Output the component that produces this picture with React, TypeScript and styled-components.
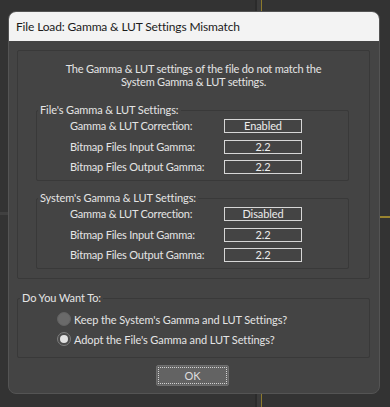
import React from "react";
import styled, { createGlobalStyle } from "styled-components";

const GlobalStyle = createGlobalStyle`
  html, body {
    margin: 0;
    padding: 0;
    width: 390px;
    height: 407px;
    overflow: hidden;
  }
  body {
    background-color: #333333;
    background-image:
      linear-gradient(#9a8430, #9a8430),
      linear-gradient(#404040, #404040),
      linear-gradient(#8d7a2c, #8d7a2c),
      linear-gradient(to right, #2b2b2b 0, #2b2b2b 2px, #3b3b3b 2px, #3b3b3b 7px);
    background-repeat: no-repeat;
    background-size: 10px 2px, 8px 3px, 1px 407px, 7px 407px;
    background-position: 380px 216px, 0 212px, 261px 0, 255px 0;
    font-family: Lato, "Noto Sans", sans-serif;
  }
`;

const Page = styled.div`
  padding: 11px 0 0 8px;
`;

const Dialog = styled.div`
  box-sizing: border-box;
  width: 372px;
  height: 383px;
  background: #444444;
  border: 1px solid #545454;
  border-radius: 8px;
  overflow: hidden;
  display: flex;
  flex-direction: column;
`;

const TitleBar = styled.div`
  height: 29px;
  flex: none;
  display: flex;
  align-items: center;
  padding-left: 7px;
  background: #f3f3f3;
  color: #1b1b1b;
  font-size: 12px;
  letter-spacing: -0.15px;
`;

const Body = styled.div`
  display: flex;
  flex-direction: column;
  padding: 9px 9px 7px 8px;
  color: #e4e4e4;
  font-size: 11px;
  letter-spacing: -0.1px;
`;

const Panel = styled.div`
  box-sizing: border-box;
  height: 229px;
  border: 1px solid #393939;
  border-radius: 2px;
  padding: 11px 0 8px;
  display: flex;
  flex-direction: column;
`;

const Message = styled.div`
  text-align: center;
  line-height: 13px;
  margin-bottom: 15px;
  letter-spacing: -0.2px;
`;

const Group = styled.fieldset<{ $gapTop?: number }>`
  margin: ${(p) => p.$gapTop ?? 0}px 20px 0 18px;
  padding: 2px 0 6px;
  border: 1px solid #393939;
  border-radius: 2px;
  min-width: 0;
`;

const Rows = styled.div`
  display: grid;
  grid-template-columns: 154px 78px;
  grid-auto-rows: 14px;
  row-gap: 6.5px;
  align-items: center;
  padding-left: 33px;
`;

const Legend = styled.legend<{ $offset: number }>`
  margin-left: ${(p) => p.$offset}px;
  padding: 0 2px;
  line-height: 14px;
`;

const RowLabel = styled.span`
  line-height: 14px;
  letter-spacing: -0.2px;
`;

const Field = styled.span`
  box-sizing: border-box;
  height: 14px;
  border: 1px solid #d6d6d6;
  text-align: center;
  line-height: 12px;
  color: #ececec;
`;

const ChoiceGroup = styled.fieldset`
  margin: 12px 0 0;
  padding: 4px 0 8px;
  border: 1px solid #393939;
  border-radius: 2px;
  min-width: 0;
`;

const Choices = styled.div`
  display: flex;
  flex-direction: column;
  padding-left: 39px;
`;

const Choice = styled.label`
  height: 20px;
  display: flex;
  align-items: center;
  gap: 3px;
`;

const RadioDot = styled.span<{ $checked?: boolean }>`
  box-sizing: border-box;
  width: 14px;
  height: 14px;
  border-radius: 50%;
  flex: none;
  display: flex;
  align-items: center;
  justify-content: center;
  background: ${(p) => (p.$checked ? "#4b4b4b" : "#6a6a6a")};
  border: 1px solid ${(p) => (p.$checked ? "#7c7c7c" : "#626262")};
  &::after {
    content: "";
    display: ${(p) => (p.$checked ? "block" : "none")};
    width: 8px;
    height: 8px;
    border-radius: 50%;
    background: #e2e2e2;
  }
`;

const ButtonRow = styled.div`
  display: flex;
  justify-content: center;
  margin-top: 7px;
  padding-right: 2px;
`;

const OkButton = styled.button`
  box-sizing: border-box;
  width: 73px;
  height: 21px;
  background: #636363;
  border: 1px solid #6f6f6f;
  border-radius: 2px;
  outline: 1px dotted #d2d2d2;
  outline-offset: -3px;
  color: #dedede;
  font-family: Lato, "Noto Sans", sans-serif;
  font-size: 11px;
  padding: 0;
`;

type Row = { label: string; value: string };

const fileRows: Row[] = [
  { label: "Gamma & LUT Correction:", value: "Enabled" },
  { label: "Bitmap Files Input Gamma:", value: "2.2" },
  { label: "Bitmap Files Output Gamma:", value: "2.2" },
];

const systemRows: Row[] = [
  { label: "Gamma & LUT Correction:", value: "Disabled" },
  { label: "Bitmap Files Input Gamma:", value: "2.2" },
  { label: "Bitmap Files Output Gamma:", value: "2.2" },
];

function SettingsGroup({ title, rows, gapTop }: { title: string; rows: Row[]; gapTop?: number }) {
  return (
    <Group $gapTop={gapTop}>
      <Legend $offset={1}>{title}</Legend>
      <Rows>
        {rows.map((r) => (
          <React.Fragment key={r.label}>
            <RowLabel>{r.label}</RowLabel>
            <Field>{r.value}</Field>
          </React.Fragment>
        ))}
      </Rows>
    </Group>
  );
}

export default function App() {
  return (
    <>
      <GlobalStyle />
      <Page>
        <Dialog>
          <TitleBar>File Load: Gamma &amp; LUT Settings Mismatch</TitleBar>
          <Body>
            <Panel>
              <Message>
                The Gamma &amp; LUT settings of the file do not match the
                <br />
                System Gamma &amp; LUT settings.
              </Message>
              <SettingsGroup title="File's Gamma & LUT Settings:" rows={fileRows} />
              <SettingsGroup title="System's Gamma & LUT Settings:" rows={systemRows} gapTop={10} />
            </Panel>
            <ChoiceGroup>
              <Legend $offset={2}>Do You Want To:</Legend>
              <Choices>
                <Choice>
                  <RadioDot />
                  Keep the System's Gamma and LUT Settings?
                </Choice>
                <Choice>
                  <RadioDot $checked />
                  Adopt the File's Gamma and LUT Settings?
                </Choice>
              </Choices>
            </ChoiceGroup>
            <ButtonRow>
              <OkButton>OK</OkButton>
            </ButtonRow>
          </Body>
        </Dialog>
      </Page>
    </>
  );
}
